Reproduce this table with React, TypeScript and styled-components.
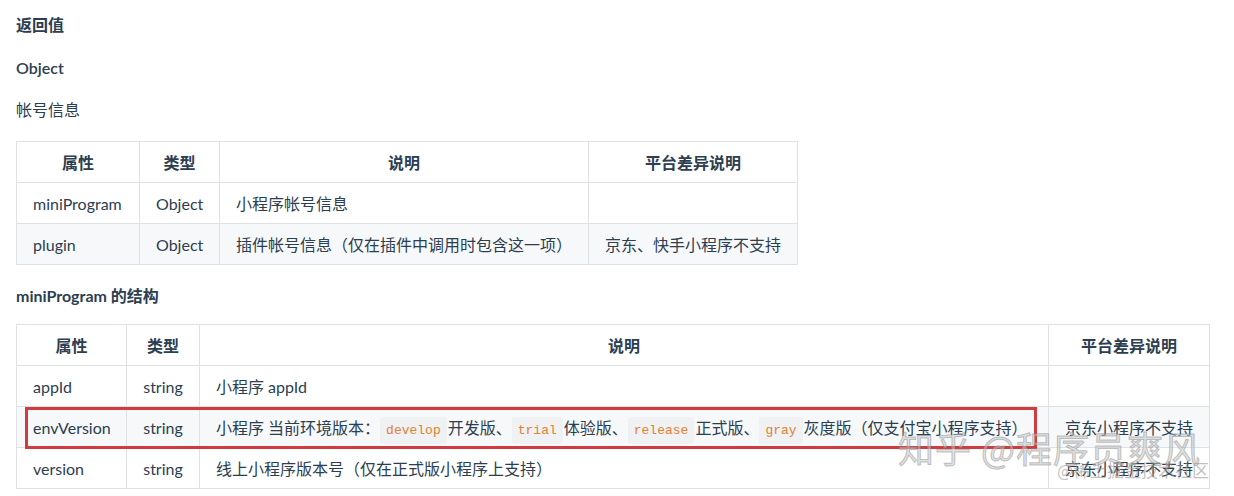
import React from "react";
import styled, { createGlobalStyle } from "styled-components";

const Global = createGlobalStyle`
  html, body { margin: 0; padding: 0; background: #fff; }
  body { font-family: "Lato", "Noto Sans CJK SC", sans-serif; color: #2c3e50; }
`;

const Page = styled.div`
  position: relative;
  width: 1234px;
  height: 496px;
  overflow: hidden;
  box-sizing: border-box;
  padding: 14px 16px 0;
`;

const Title = styled.div<{ $mt?: number }>`
  font-size: 16px;
  font-weight: 700;
  line-height: 22px;
  color: #2c3e50;
  margin-top: ${(p) => p.$mt ?? 0}px;
`;

const Para = styled.div<{ $mt?: number }>`
  font-size: 16px;
  line-height: 22px;
  color: #2c3e50;
  margin-top: ${(p) => p.$mt ?? 0}px;
`;

const TableWrap = styled.div<{ $mt: number; $w: number }>`
  position: relative;
  margin-top: ${(p) => p.$mt}px;
  width: ${(p) => p.$w}px;
`;

const Table = styled.table`
  border-collapse: collapse;
  width: 100%;
  table-layout: fixed;
  font-size: 16px;
  color: #2c3e50;
`;

const Th = styled.th`
  border: 1px solid #dfe2e5;
  height: 40px;
  padding: 0 12px;
  font-weight: 700;
  text-align: center;
  background: #fff;
`;

const Tr = styled.tr<{ $alt?: boolean }>`
  background: ${(p) => (p.$alt ? "#f6f8fa" : "#fff")};
`;

const Td = styled.td<{ $align?: "left" | "center" }>`
  border: 1px solid #dfe2e5;
  height: 40px;
  padding: 0 16px;
  text-align: ${(p) => p.$align ?? "left"};
  white-space: nowrap;
`;

const Code = styled.code`
  font-family: "Liberation Mono", "DejaVu Sans Mono", monospace;
  font-size: 13px;
  color: #e47f32;
  background: #eff1f3;
  border-radius: 3px;
  padding: 6px 6px;
  margin: 0 1px 0 0;
`;

const RedBox = styled.div`
  position: absolute;
  left: 9px;
  top: 83px;
  width: 1006px;
  height: 36px;
  border: 3px solid #cf3b3f;
  pointer-events: none;
`;

const Watermark = styled.div`
  position: absolute;
  left: 898px;
  top: 419px;
  font-family: "Noto Sans CJK SC", sans-serif;
  font-size: 36px;
  line-height: 56px;
  color: rgba(200, 200, 200, 0.55);
  -webkit-text-stroke: 1px rgba(130, 130, 130, 0.45);
  white-space: nowrap;
  letter-spacing: 1px;
`;

const SubMark = styled.div`
  position: absolute;
  left: 1057px;
  top: 458px;
  font-family: "Noto Sans CJK SC", sans-serif;
  font-size: 17px;
  line-height: 24px;
  color: rgba(150, 150, 150, 0.6);
  white-space: nowrap;
`;

export default function App() {
  return (
    <>
      <Global />
      <Page>
        <Title>返回值</Title>
        <Title $mt={21} style={{ fontWeight: 600 }}>Object</Title>
        <Para $mt={20}>帐号信息</Para>
        <TableWrap $mt={20} $w={781}>
          <Table>
            <colgroup>
              <col style={{ width: 123 }} />
              <col style={{ width: 80 }} />
              <col style={{ width: 369 }} />
              <col style={{ width: 209 }} />
            </colgroup>
            <thead>
              <tr>
                <Th>属性</Th>
                <Th>类型</Th>
                <Th>说明</Th>
                <Th>平台差异说明</Th>
              </tr>
            </thead>
            <tbody>
              <Tr>
                <Td>miniProgram</Td>
                <Td $align="center">Object</Td>
                <Td>小程序帐号信息</Td>
                <Td $align="center"></Td>
              </Tr>
              <Tr $alt>
                <Td>plugin</Td>
                <Td $align="center">Object</Td>
                <Td>插件帐号信息（仅在插件中调用时包含这一项）</Td>
                <Td $align="center">京东、快手小程序不支持</Td>
              </Tr>
            </tbody>
          </Table>
        </TableWrap>
        <Title $mt={20}>miniProgram 的结构</Title>
        <TableWrap $mt={17} $w={1193}>
          <Table>
            <colgroup>
              <col style={{ width: 110 }} />
              <col style={{ width: 73 }} />
              <col style={{ width: 849 }} />
              <col style={{ width: 161 }} />
            </colgroup>
            <thead>
              <tr>
                <Th>属性</Th>
                <Th>类型</Th>
                <Th>说明</Th>
                <Th>平台差异说明</Th>
              </tr>
            </thead>
            <tbody>
              <Tr>
                <Td>appId</Td>
                <Td $align="center">string</Td>
                <Td>小程序 appId</Td>
                <Td $align="center"></Td>
              </Tr>
              <Tr $alt>
                <Td>envVersion</Td>
                <Td $align="center">string</Td>
                <Td>
                  小程序 当前环境版本：<Code>develop</Code>开发版、<Code>trial</Code>体验版、
                  <Code>release</Code>正式版、<Code>gray</Code>灰度版（仅支付宝小程序支持）
                </Td>
                <Td $align="center">京东小程序不支持</Td>
              </Tr>
              <Tr>
                <Td>version</Td>
                <Td $align="center">string</Td>
                <Td>线上小程序版本号（仅在正式版小程序上支持）</Td>
                <Td $align="center">京东小程序不支持</Td>
              </Tr>
            </tbody>
          </Table>
          <RedBox />
        </TableWrap>
        <Watermark>知乎 @程序员爽风</Watermark>
        <SubMark>@稀土掘金技术社区</SubMark>
      </Page>
    </>
  );
}
